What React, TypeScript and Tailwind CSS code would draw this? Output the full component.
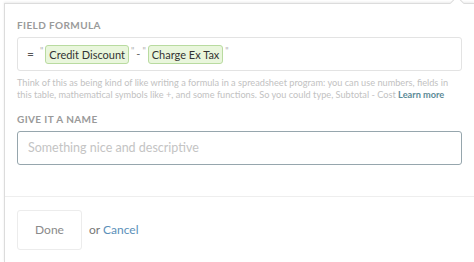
import React from "react"

const Pill = ({ children }: { children: React.ReactNode }) => (
  <span className="inline-flex items-center h-[19px] px-[3px] rounded-[3px] border border-[#b9dba0] bg-[#e9f6dc] text-[#333] text-[11px] leading-none">
    {children}
  </span>
)

const Quote = () => <span className="text-[#b0b0b0] text-[9px] mx-[2px] -mt-[6px]">"</span>

export default function App() {
  return (
    <div className="flex w-[474px] h-[262px] bg-white overflow-hidden" style={{ fontFamily: "Lato, 'Open Sans', sans-serif" }}>
      {/* sliver of the table behind the popover */}
      <div className="w-[4px] flex flex-col pt-[70px] gap-[18px]">
        <div className="h-[6px] w-[3px] bg-[#9a9a9a]" />
        <div className="h-[1px] w-[4px] bg-[#ddd]" />
        <div className="h-[5px] w-[2px] bg-[#aaa] mt-[30px]" />
        <div className="h-[1px] w-[4px] bg-[#ddd] mt-[10px]" />
        <div className="h-[5px] w-[3px] bg-[#999] mt-[40px]" />
        <div className="h-[1px] w-[4px] bg-[#ddd] mt-[6px]" />
        <div className="h-[5px] w-[2px] bg-[#999]" />
      </div>

      <div className="relative flex-1 flex flex-col mt-[3px] border-t border-l border-[#dcdcdc] shadow-[0_-1px_2px_rgba(0,0,0,0.08)]">
        {/* arrow notch */}
        <div className="absolute -top-[6px] left-[447px] w-[10px] h-[10px] rotate-45 bg-white border-t border-l border-[#dcdcdc]" />

        <div className="flex flex-col px-[12px] pt-[16px]">
          <div className="text-[10px] tracking-[0.04em] font-bold text-[#9a9a9a] leading-none">FIELD FORMULA</div>
          <div className="mt-[7px] w-[445px] h-[34px] border border-[#e3e3e3] rounded-[3px] flex items-center pl-[9px] text-[#555] text-[12px]">
            <span className="mr-[4px]">=</span>
            <Quote />
            <Pill>Credit Discount</Pill>
            <Quote />
            <span className="text-[#666] text-[11px]">-</span>
            <Quote />
            <Pill>Charge Ex Tax</Pill>
            <Quote />
          </div>
          <p className="mt-[6px] text-[9.2px] leading-[12px] text-[#c2c2c2] w-[440px]">
            Think of this as being kind of like writing a formula in a spreadsheet program: you can use numbers, fields in this table, mathematical symbols like +, and some functions. So you could type, Subtotal - Cost{" "}
            <span className="text-[#5c8a96] font-bold">Learn more</span>
          </p>

          <div className="mt-[13px] text-[10px] tracking-[0.04em] font-bold text-[#9a9a9a] leading-none">GIVE IT A NAME</div>
          <div className="mt-[7px] w-[445px] h-[34px] border border-[#96a6ad] rounded-[3px] flex items-center pl-[10px] text-[12.5px] text-[#c4c4c4]">
            Something nice and descriptive
          </div>
        </div>

        <div className="mt-[31px] border-t border-[#eeeeee]" />

        <div className="flex items-center px-[12px] pt-[13px] gap-[7px]">
          <div className="w-[65px] h-[40px] border border-[#ececec] rounded-[3px] flex items-center justify-center text-[12px] text-[#8a8a8a]">
            Done
          </div>
          <span className="text-[12px] text-[#777]">
            or <span className="text-[#5b8fb9]">Cancel</span>
          </span>
        </div>
      </div>
    </div>
  )
}
